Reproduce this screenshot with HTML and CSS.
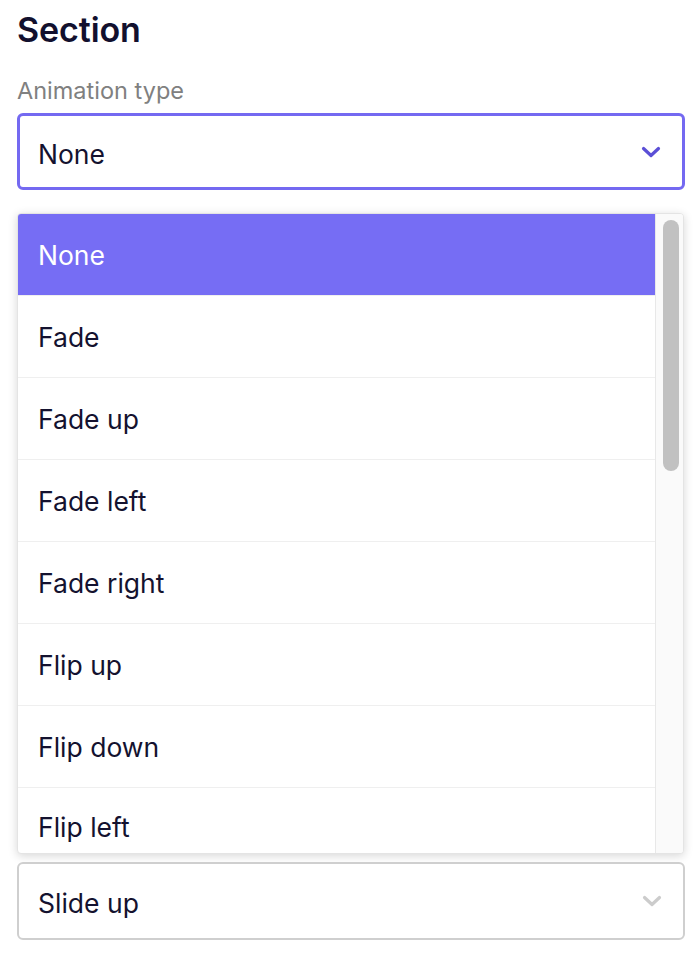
FILE: index.html
```html
<!DOCTYPE html>
<html>
<head>
<meta charset="utf-8">
<link rel="stylesheet" href="styles.css">
</head>
<body>
<div class="page">
  <h1 class="title">Section</h1>
  <div class="label">Animation type</div>
  <div class="select select-active">
    <span class="select-value">None</span>
    <svg class="chevron" width="20" height="12" viewBox="0 0 20 12"><path d="M2.5 2.5 L10 9.5 L17.5 2.5" fill="none" stroke="#5b4fd6" stroke-width="3.2" stroke-linecap="round" stroke-linejoin="round"/></svg>
  </div>
  <div class="menu">
    <ul class="options">
      <li class="option selected">None</li>
      <li class="option">Fade</li>
      <li class="option">Fade up</li>
      <li class="option">Fade left</li>
      <li class="option">Fade right</li>
      <li class="option">Flip up</li>
      <li class="option">Flip down</li>
      <li class="option option-last">Flip left</li>
    </ul>
    <div class="track"><div class="thumb"></div></div>
  </div>
  <div class="select select-idle">
    <span class="select-value">Slide up</span>
    <svg class="chevron" width="20" height="12" viewBox="0 0 20 12"><path d="M2.5 2.5 L10 9.5 L17.5 2.5" fill="none" stroke="#cccccc" stroke-width="3.2" stroke-linecap="round" stroke-linejoin="round"/></svg>
  </div>
</div>
</body>
</html>
```

FILE: styles.css
```css
html, body {
  margin: 0;
  padding: 0;
  background: #ffffff;
}
body {
  font-family: Inter, "Noto Sans", "Liberation Sans", sans-serif;
  color: #14122f;
}
.page {
  width: 668px;
  padding: 0 0 0 17px;
}
.title {
  margin: 0;
  padding-top: 10px;
  font-size: 34px;
  line-height: 40px;
  font-weight: 600;
  color: #12102e;
  letter-spacing: -0.1px;
}
.label {
  margin-top: 28px;
  font-size: 23.5px;
  line-height: 26px;
  color: #808080;
  height: 35px;
}
.select {
  box-sizing: border-box;
  height: 77px;
  display: flex;
  align-items: center;
  justify-content: space-between;
  padding: 0 21px 0 18px;
  border-radius: 6px;
  background: #fff;
}
.select-active {
  border: 3px solid #7469f1;
}
.select-idle {
  margin-top: 8px;
  height: 78px;
  border: 2px solid #cfcfcf;
  padding-left: 19px;
  padding-right: 21px;
}
.select-value {
  font-size: 26.5px;
  color: #14122f;
  padding-top: 4px;
}
.chevron {
  display: block;
}
.menu {
  box-sizing: border-box;
  margin-top: 23px;
  height: 641px;
  width: 667px;
  display: flex;
  border: 1px solid #e4e4e4;
  border-radius: 4px;
  overflow: hidden;
  box-shadow: 0 2px 10px rgba(0, 0, 0, 0.16);
  background: #fff;
}
.options {
  list-style: none;
  margin: 0;
  padding: 0;
  flex: 1;
  overflow: hidden;
}
.option {
  box-sizing: border-box;
  height: 82px;
  display: flex;
  align-items: center;
  padding-left: 20px;
  border-bottom: 1px solid #efefef;
  font-size: 26.5px;
  color: #14122f;
}
.option-last {
  height: 67px;
  border-bottom: none;
  align-items: flex-start;
  padding-top: 23px;
}
.option.selected {
  background: #766df4;
  color: #ffffff;
}
.track {
  width: 28px;
  border-left: 1px solid #e8e8e8;
  background: #fafafa;
  padding: 6px 0 0 7px;
  box-sizing: border-box;
}
.thumb {
  width: 16px;
  height: 251px;
  border-radius: 8px;
  background: #c1c1c1;
}
```
